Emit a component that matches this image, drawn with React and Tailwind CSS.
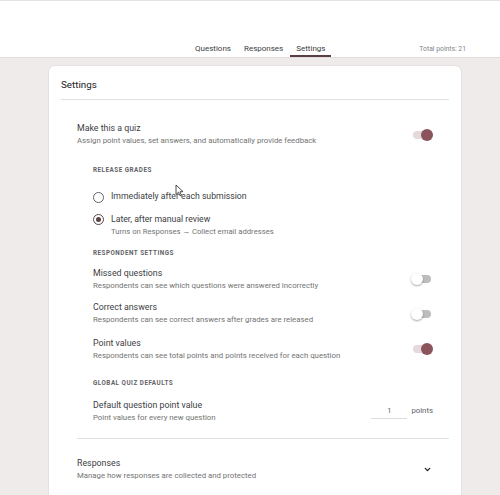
import React from 'react';
import { ChevronDown } from 'lucide-react';

const Toggle = ({ on }) => (
  <div className="relative w-[22px] h-[12px] flex items-center">
    <div className={`w-[18px] h-[8px] ml-[2px] rounded-full ${on ? 'bg-[#e6d9db]' : 'bg-[#bdbdbd]'}`} />
    <div
      className={`absolute top-0 w-[12px] h-[12px] rounded-full ${
        on ? 'right-0 bg-[#8b535c]' : 'left-0 bg-white shadow-[0_1px_2px_rgba(0,0,0,0.35)]'
      }`}
    />
  </div>
);

const Radio = ({ checked }) => (
  <div
    className={`w-[11px] h-[11px] rounded-full border-[1.5px] flex items-center justify-center ${
      checked ? 'border-[#5a4346]' : 'border-[#5f6368]'
    }`}
  >
    {checked && <div className="w-[5px] h-[5px] rounded-full bg-[#5a4346]" />}
  </div>
);

const SectionLabel = ({ children, className }) => (
  <div className={`text-[6.3px] leading-[10px] font-bold tracking-[0.08em] text-[#5f6368] ${className}`}>
    {children}
  </div>
);

const SettingRow = ({ title, sub, right, className }) => (
  <div className={`flex items-center justify-between ${className}`}>
    <div>
      <div className="text-[8.8px] leading-[13px] text-[#3c4043]">{title}</div>
      <div className="text-[7.8px] leading-[12px] text-[#737373]">{sub}</div>
    </div>
    {right}
  </div>
);

const App = () => {
  const respondent = [
    { title: 'Missed questions', sub: 'Respondents can see which questions were answered incorrectly', on: false, mt: 'mt-[8.5px]' },
    { title: 'Correct answers', sub: 'Respondents can see correct answers after grades are released', on: false, mt: 'mt-[9.5px]' },
    { title: 'Point values', sub: 'Respondents can see total points and points received for each question', on: true, mt: 'mt-[10.5px]' },
  ];

  return (
    <div className="w-[500px] h-[495px] overflow-hidden bg-[#f0ebeb] font-['Roboto',sans-serif] relative">
      {/* Top bar */}
      <div className="h-[58px] bg-white border-t border-[#e3e3e3] border-b border-b-[#e0dcdc] flex items-end">
        <div className="flex items-end pl-[189px] gap-[1px] text-[8px] leading-[12px] text-[#3c4043]">
          <div className="px-[6px] h-[14px]">Questions</div>
          <div className="px-[6px] h-[14px]">Responses</div>
          <div className="px-[6px] h-[14px] border-b-[2px] border-[#5a3f42]">Settings</div>
        </div>
        <div className="ml-auto pr-[34px] h-[14px] text-[6.8px] leading-[12px] text-[#80868b]">Total points: 21</div>
      </div>

      {/* Card */}
      <div className="ml-[48px] mt-[7px] w-[414px] bg-white rounded-[7px] border border-[#e6e1e1] px-[12px] pb-[20px]">
        <div className="h-[34px] flex items-end pb-[8px] border-b border-[#e0e0e0] text-[9.8px] leading-[13px] text-[#202124]">
          Settings
        </div>

        <div className="px-[16px]">
          <SettingRow
            className="pt-[22px]"
            title="Make this a quiz"
            sub="Assign point values, set answers, and automatically provide feedback"
            right={<Toggle on />}
          />

          <div className="pl-[16px]">
            <SectionLabel className="mt-[18px]">RELEASE GRADES</SectionLabel>

            <div className="mt-[15px] flex items-center gap-[7px] h-[14px]">
              <Radio />
              <span className="text-[8.7px] text-[#3c4043]">Immediately after each submission</span>
            </div>

            <div className="mt-[9px] flex gap-[7px]">
              <div className="pt-[1px]"><Radio checked /></div>
              <div>
                <div className="text-[8.7px] leading-[13px] text-[#3c4043]">Later, after manual review</div>
                <div className="text-[7.7px] leading-[12px] text-[#737373]">Turns on Responses → Collect email addresses</div>
              </div>
            </div>

            <SectionLabel className="mt-[10px]">RESPONDENT SETTINGS</SectionLabel>

            {respondent.map((r, i) => (
              <SettingRow key={i} className={r.mt} title={r.title} sub={r.sub} right={<Toggle on={r.on} />} />
            ))}

            <SectionLabel className="mt-[16px]">GLOBAL QUIZ DEFAULTS</SectionLabel>

            <div className="mt-[11.5px] flex items-center justify-between">
              <div>
                <div className="text-[8.8px] leading-[13px] text-[#3c4043]">Default question point value</div>
                <div className="text-[7.8px] leading-[12px] text-[#737373]">Point values for every new question</div>
              </div>
              <div className="flex items-center gap-[4px]">
                <div className="w-[36px] h-[14px] border-b border-[#dadce0] text-center text-[7.5px] leading-[12px] text-[#5f6368]">1</div>
                <span className="text-[7.8px] text-[#5f6368] -mt-[2px]">points</span>
              </div>
            </div>
          </div>

          <div className="mt-[14px] border-t border-[#e0e0e0] -mr-[16px]" />
        </div>

        <div className="mt-[18px] flex items-center justify-between px-[16px]">
          <div>
            <div className="text-[8.8px] leading-[13px] text-[#3c4043]">Responses</div>
            <div className="text-[7.8px] leading-[12px] text-[#737373]">Manage how responses are collected and protected</div>
          </div>
          <ChevronDown size={9} strokeWidth={3.5} className="text-[#202124] mr-[1px]" />
        </div>
      </div>

      {/* mouse cursor */}
      <svg className="absolute left-[175px] top-[184px]" width="9" height="13" viewBox="0 0 9 13">
        <path d="M1 1 L1 10.5 L3.4 8.3 L5 11.8 L6.4 11.2 L4.9 7.8 L8 7.6 Z" fill="white" stroke="#222" strokeWidth="0.8" />
      </svg>
    </div>
  );
};

export default App;
